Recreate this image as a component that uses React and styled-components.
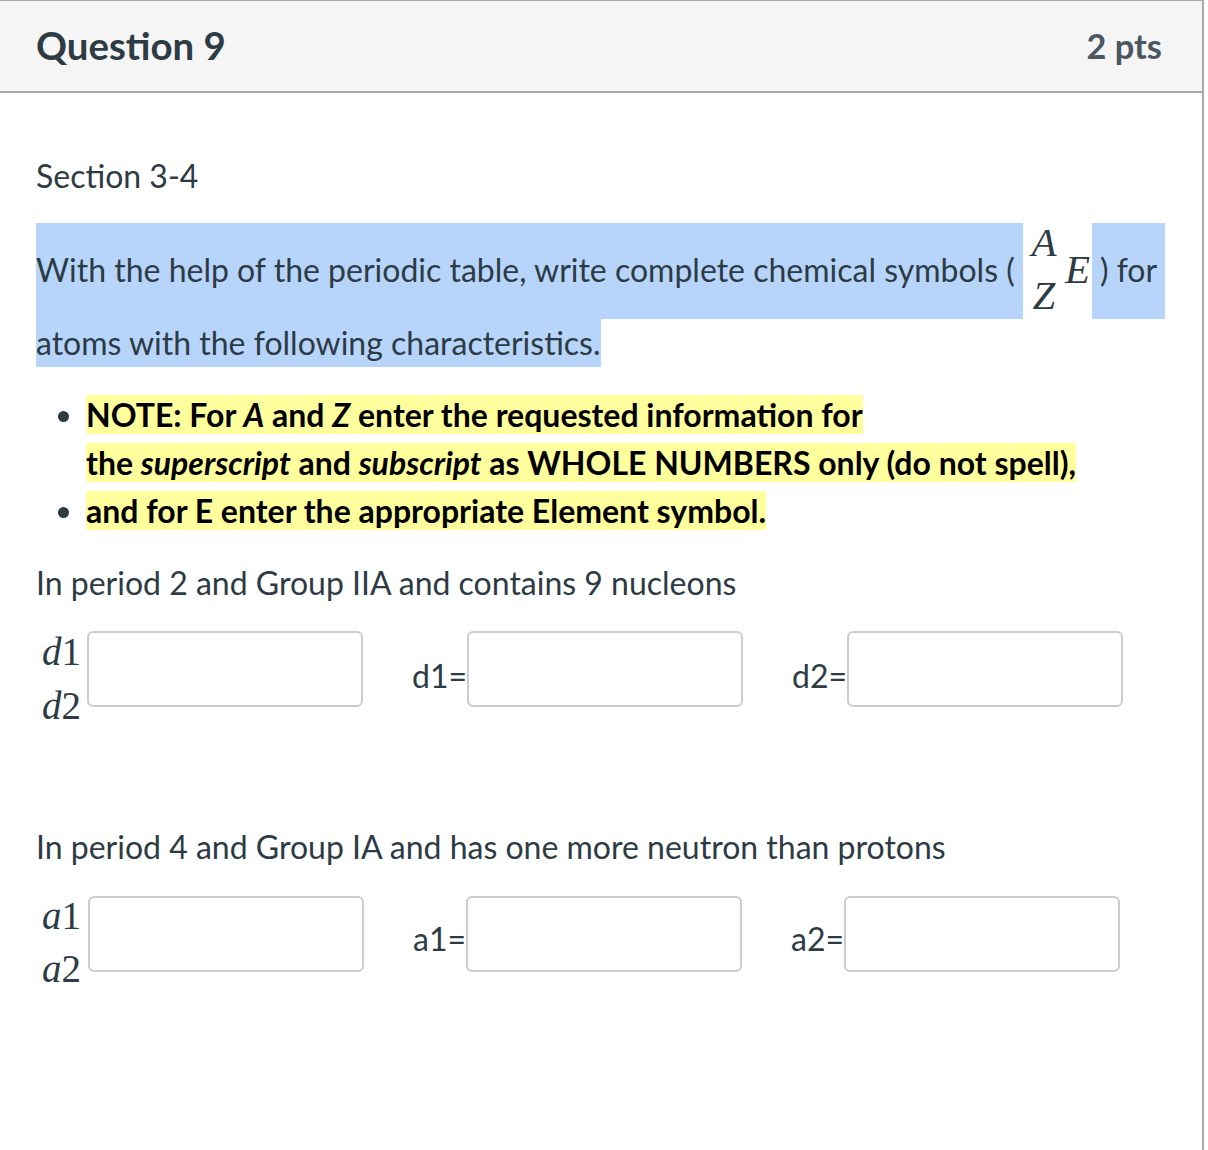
import React from 'react';
import styled, { createGlobalStyle } from 'styled-components';

const Global = createGlobalStyle`
  html, body {
    margin: 0;
    padding: 0;
    background: #fff;
  }
  body {
    font-family: Lato, "Open Sans", sans-serif;
    color: #2d3b45;
    font-size: 32px;
    font-variant-ligatures: common-ligatures;
  }
`;

const Card = styled.section`
  width: 1204px;
  height: 1150px;
  box-sizing: border-box;
  border-top: 1px solid #aaa;
  border-right: 2px solid #aaa;
  overflow: hidden;
`;

const Header = styled.header`
  display: flex;
  justify-content: space-between;
  align-items: center;
  height: 92px;
  box-sizing: border-box;
  padding: 0 40px 2px 36px;
  background: #f5f5f5;
  border-bottom: 2px solid #aaa;
`;

const Title = styled.h2`
  margin: 0;
  font-size: 38.4px;
  font-weight: 700;
`;

const Points = styled.div`
  font-size: 34.4px;
  font-weight: 700;
  color: #4a5660;
`;

const Body = styled.div`
  padding: 59px 0 0 36px;
`;

const Text = styled.p`
  margin: ${p => p.$margin || '0'};
  line-height: 48px;
`;

const SelectedLine = styled.div`
  display: flex;
  align-items: center;
  height: 96px;
  margin-top: 23px;
`;

const Selected = styled.span`
  display: flex;
  align-items: center;
  height: 96px;
  box-sizing: border-box;
  padding: 0 ${p => p.$right || 0}px 4px ${p => p.$left || 0}px;
  white-space: pre;
  background: #b7d5fb;
`;

const SelectedShort = styled.span`
  display: inline-block;
  line-height: 48px;
  background: #b7d5fb;
`;

const MathStack = styled.span`
  display: inline-flex;
  flex-direction: column;
  align-items: center;
  width: 42px;
  margin-top: -5px;
  font-family: "Liberation Serif", serif;
  font-style: italic;
  font-size: 41px;
  line-height: 53px;
`;

const MathLetter = styled.span`
  width: 27px;
  margin-top: -5px;
  font-family: "Liberation Serif", serif;
  font-style: italic;
  font-size: 41px;
`;

const List = styled.ul`
  margin: 24px 0 0;
  padding: 0 0 0 50px;
  line-height: 48px;
  width: 1060px;
`;

const Note = styled.mark`
  background: #ffff9e;
  color: #000;
  font-weight: 700;
`;

const Row = styled.div`
  display: flex;
  align-items: flex-start;
  margin: ${p => p.$margin};
`;

const Fraction = styled.div`
  display: flex;
  flex-direction: column;
  width: ${p => p.$width}px;
  margin-top: ${p => p.$top}px;
  padding-left: 6px;
  box-sizing: border-box;
  font-family: "Liberation Serif", serif;
  font-size: 39px;
  line-height: ${p => p.$leading}px;
  i { font-style: italic; }
`;

const Field = styled.input`
  width: 276px;
  height: 76px;
  box-sizing: border-box;
  background: #fff;
  border: 2px solid #ccc;
  border-radius: 6px;
  margin: 0;
  padding: 0;
`;

const Label = styled.span`
  width: ${p => p.$width}px;
  padding-left: 49px;
  box-sizing: border-box;
  line-height: ${p => p.$leading}px;
  white-space: nowrap;
`;

export default function App() {
  return (
    <Card>
      <Global />
      <Header>
        <Title>Question 9</Title>
        <Points>2 pts</Points>
      </Header>
      <Body>
        <Text>Section 3-4</Text>
        <SelectedLine>
          <Selected>With the help of the periodic table, write complete chemical symbols ( </Selected>
          <MathStack><span>A</span><span>Z</span></MathStack>
          <MathLetter>E</MathLetter>
          <Selected $left={8} $right={8}>) for</Selected>
        </SelectedLine>
        <Text><SelectedShort>atoms with the following characteristics.</SelectedShort></Text>
        <List>
          <li>
            <Note>NOTE: For <em>A</em> and <em>Z</em> enter the requested information for</Note>
            <br />
            <Note>the <em>superscript</em> and <em>subscript</em> as WHOLE NUMBERS only (do not spell),</Note>
          </li>
          <li><Note>and for E enter the appropriate Element symbol.</Note></li>
        </List>
        <Text $margin="24px 0 0">In period 2 and Group IIA and contains 9 nucleons</Text>
        <Row $margin="24px 0 0">
          <Fraction $width={51} $top={-6} $leading={54}><span><i>d</i>1</span><span><i>d</i>2</span></Fraction>
          <Field aria-label="d1 over d2" />
          <Label $width={104} $leading={89}>d1=</Label>
          <Field aria-label="d1" />
          <Label $width={104} $leading={89}>d2=</Label>
          <Field aria-label="d2" />
        </Row>
        <Text $margin="90px 0 0">In period 4 and Group IA and has one more neutron than protons</Text>
        <Row $margin="25px 0 0">
          <Fraction $width={52} $top={-7} $leading={53}><span><i>a</i>1</span><span><i>a</i>2</span></Fraction>
          <Field aria-label="a1 over a2" />
          <Label $width={102} $leading={86}>a1=</Label>
          <Field aria-label="a1" />
          <Label $width={102} $leading={86}>a2=</Label>
          <Field aria-label="a2" />
        </Row>
      </Body>
    </Card>
  );
}
